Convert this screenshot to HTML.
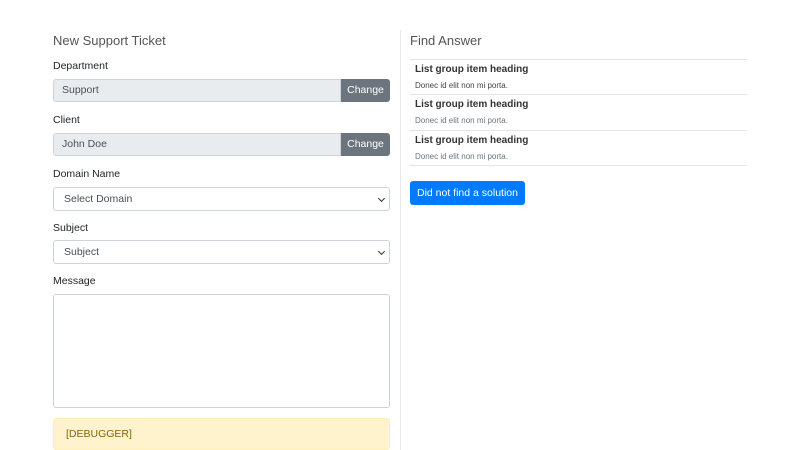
<!DOCTYPE html>
<html><head><style>
*{box-sizing:border-box;margin:0;padding:0}
body{width:800px;height:450px;background:#fff;font-family:"Liberation Sans",sans-serif;color:#212529;position:relative;overflow:hidden}
.a{position:absolute}
.t{font-size:13px;font-weight:300;color:#555}
.l{font-size:10.5px;color:#212529}
.inp{background:#e9ecef;border:1px solid #ced4da;border-radius:3px 0 0 3px;font-size:10.5px;color:#495057;padding-left:8px;line-height:21px;height:23px}
.btn{background:#6c757d;color:#fff;font-size:10.5px;text-align:center;line-height:23px;height:23px;border-radius:0 3px 3px 0}
.sel{border:1px solid #ced4da;border-radius:3px;font-size:10.5px;color:#495057;padding-left:10px;line-height:22px;height:24px;background:#fff}
.sel:after{content:"";position:absolute;right:5px;top:8px;width:4px;height:4px;border-right:1.3px solid #333;border-bottom:1.3px solid #333;transform:rotate(45deg)}
.hr{height:1px;background:#e5e5e5;left:410px;width:337px}
.h{font-size:10px;font-weight:bold;color:#333;left:415px}
.s{font-size:8px;color:#6c757d;left:415px}
</style></head><body>
<div class="a t" style="left:53px;top:33px">New Support Ticket</div>
<div class="a l" style="left:53px;top:60px">Department</div>
<div class="a inp" style="left:53px;top:79px;width:288px">Support</div>
<div class="a btn" style="left:341px;top:79px;width:49px">Change</div>
<div class="a l" style="left:53px;top:114px">Client</div>
<div class="a inp" style="left:53px;top:133px;width:288px">John Doe</div>
<div class="a btn" style="left:341px;top:133px;width:49px">Change</div>
<div class="a l" style="left:53px;top:168px">Domain Name</div>
<div class="a sel" style="left:53px;top:187px;width:337px">Select Domain</div>
<div class="a l" style="left:53px;top:222px">Subject</div>
<div class="a sel" style="left:53px;top:240px;width:337px">Subject</div>
<div class="a l" style="left:53px;top:275px">Message</div>
<div class="a" style="left:53px;top:294px;width:337px;height:114px;border:1px solid #ced4da;border-radius:3px"></div>
<div class="a" style="left:53px;top:418px;width:337px;height:32px;background:#fff3cd;border:1px solid #ffeeba;border-radius:3px;color:#856404;font-size:10.5px;padding:9px 0 0 12px">[DEBUGGER]</div>
<div class="a" style="left:400px;top:30px;width:1px;height:420px;background:#e8e8e8"></div>
<div class="a t" style="left:410px;top:33px">Find Answer</div>
<div class="a hr" style="top:59px"></div>
<div class="a h" style="top:64px">List group item heading</div>
<div class="a s" style="top:81px;color:#444">Donec id elit non mi porta.</div>
<div class="a hr" style="top:94px"></div>
<div class="a h" style="top:99px">List group item heading</div>
<div class="a s" style="top:116px">Donec id elit non mi porta.</div>
<div class="a hr" style="top:130px"></div>
<div class="a h" style="top:135px">List group item heading</div>
<div class="a s" style="top:152px">Donec id elit non mi porta.</div>
<div class="a hr" style="top:165px"></div>
<div class="a" style="left:410px;top:181px;width:115px;height:24px;background:#007bff;border-radius:3px;color:#fff;font-size:10.5px;line-height:24px;text-align:center">Did not find a solution</div>
</body></html>
